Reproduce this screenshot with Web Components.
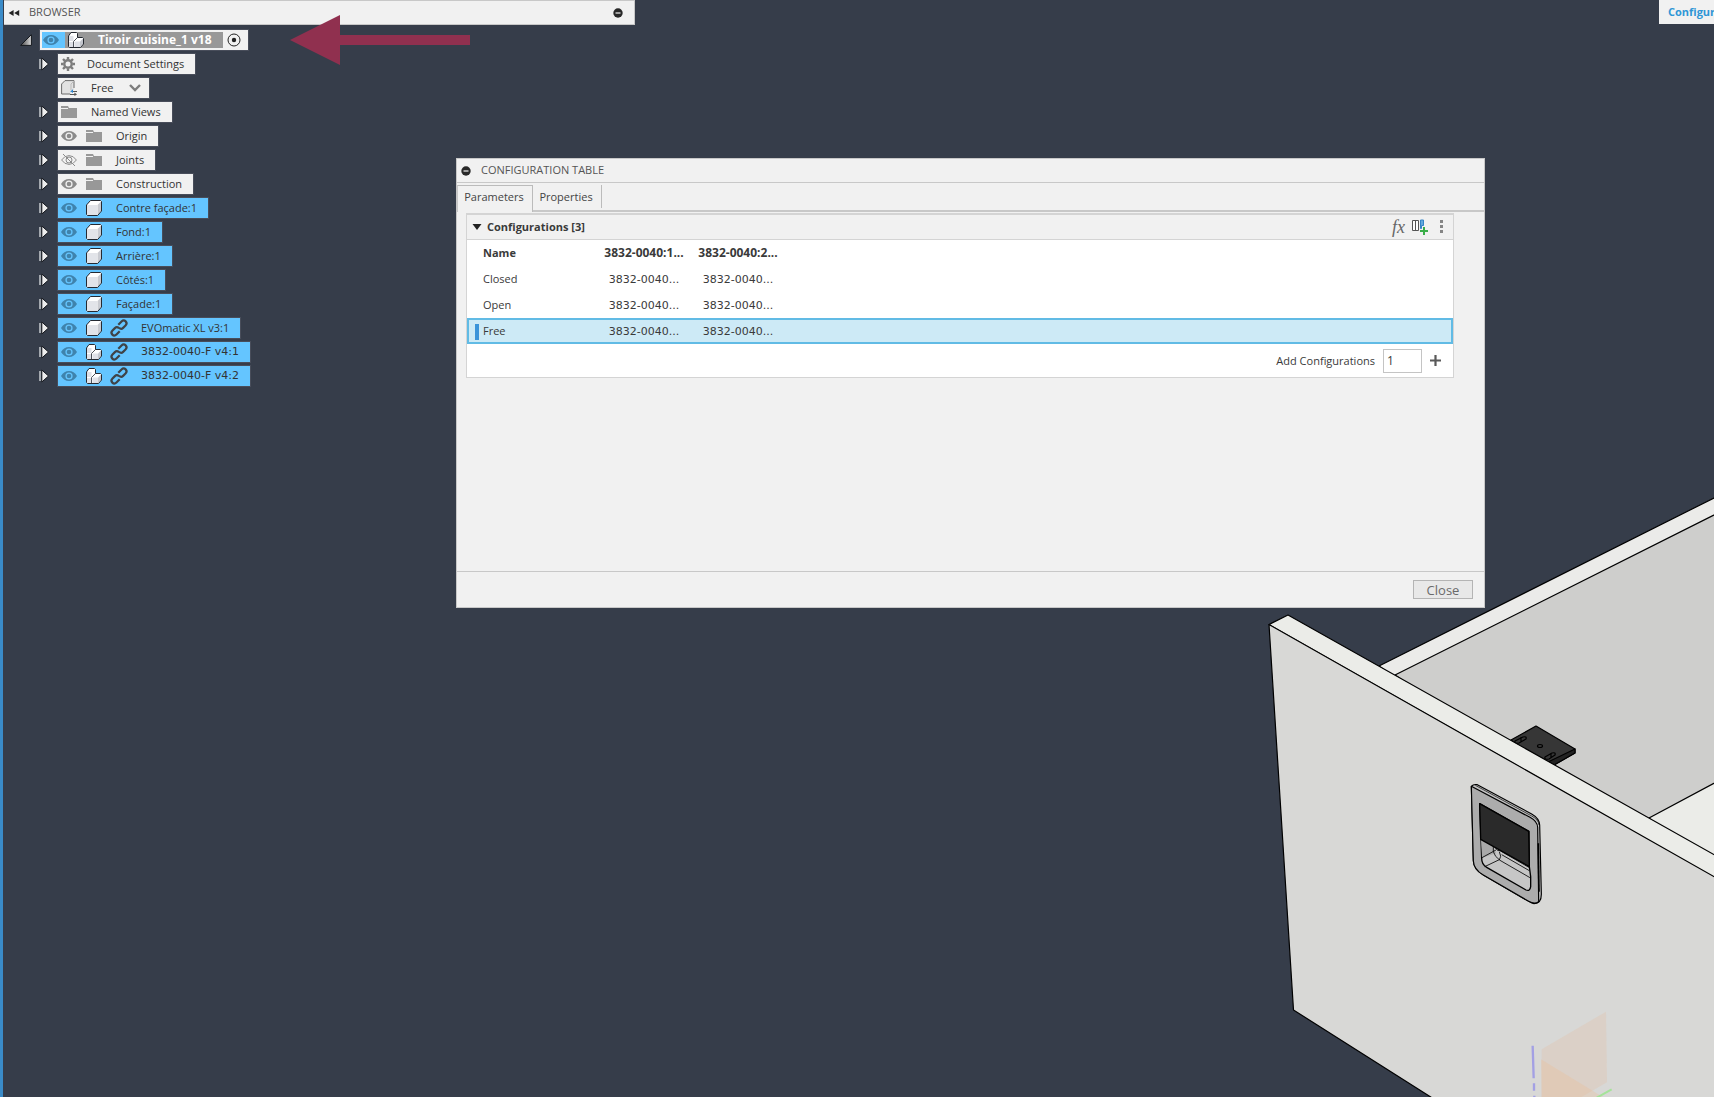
<!DOCTYPE html>
<html lang="en">
<head>
<meta charset="utf-8">
<title>Configuration Table</title>
<style>
  html, body { margin: 0; height: 100%; }
  body {
    font: 11px/16px "Open Sans", "Noto Sans", sans-serif;
    color: #3a3a3a;
    background: #363d4a;
    overflow: hidden;
    --panel: #f1f1f1;
    --line: #c8c8c8;
    --select: #64c5ff;
    --numeric: "DejaVu Sans", sans-serif;
  }
</style>
</head>
<body>
<app-workspace>
  <model-canvas slot="canvas"></model-canvas>
  <browser-panel slot="browser">
    <tree-root label="Tiroir cuisine_1 v18"></tree-root>
    <tree-item icons="gear" compact expandable>Document Settings</tree-item>
    <tree-item icons="config" choice="Free"></tree-item>
    <tree-item icons="folder" expandable>Named Views</tree-item>
    <tree-item icons="eye folder" expandable>Origin</tree-item>
    <tree-item icons="eyeoff folder" expandable>Joints</tree-item>
    <tree-item icons="eye folder" expandable>Construction</tree-item>
    <tree-item icons="eye body" expandable selected>Contre façade:1</tree-item>
    <tree-item icons="eye body" expandable selected>Fond:1</tree-item>
    <tree-item icons="eye body" expandable selected>Arrière:1</tree-item>
    <tree-item icons="eye body" expandable selected>Côtés:1</tree-item>
    <tree-item icons="eye body" expandable selected>Façade:1</tree-item>
    <tree-item icons="eye body link" expandable selected>EVOmatic XL v3:1</tree-item>
    <tree-item icons="eye assembly link" expandable selected numeric>3832-0040-F v4:1</tree-item>
    <tree-item icons="eye assembly link" expandable selected numeric>3832-0040-F v4:2</tree-item>
  </browser-panel>
  <side-tab slot="side">Configur</side-tab>
  <pointer-arrow slot="overlay"></pointer-arrow>
  <config-dialog slot="dialog" heading="CONFIGURATION TABLE"><config-table></config-table></config-dialog>
</app-workspace>

<script>
const ICONS = {
  eye: ['0 0 16 16', '<path d="M0 8Q3 3 8 3T16 8Q13 13 8 13T0 8Z" fill="currentColor"/><circle cx="8" cy="8" r="3.6" fill="var(--hole,#f1f1f1)"/><circle cx="8" cy="8" r="2.3" fill="currentColor"/>'],
  eyeoff: ['0 0 16 16', '<g fill="none" stroke="#8b8b8b"><path d="M.6 8Q3.5 3.6 8 3.6T15.4 8Q12.5 12.4 8 12.4T.6 8Z"/><circle cx="8" cy="8" r="3"/><path d="M2 2L14 14"/></g>'],
  gear: ['0 0 16 16', '<g fill="none" stroke="#7d7d7d"><circle cx="7" cy="8" r="3.7" stroke-width="2.4"/><path d="M7 1V3.6M7 12.4V15M0 8H2.6M11.4 8H14M2 3L3.9 4.9M10.1 11.1L12 13M12 3L10.1 4.9M3.9 11.1L2 13" stroke-width="2.4"/></g>'],
  folder: ['0 0 16 16', '<path d="M0 2H7L8 4H16V14H0Z" fill="#989898"/><path d="M0 4.5H7" stroke="#f1f1f1"/>'],
  body: ['0 0 16 16', '<path d="M.5 5L4.5 .5H15.5V11L11.6 15.5H.5Z" fill="#fff"/><path d="M1 5H11V15H1Z" fill="#e2e4e9"/><path d="M11.5 5L15 1.4V11L11.5 15Z" fill="#c9cbd1"/><path d="M.5 5L4.5 .5H14.5L15.5 1.5V11L11.6 15.5H1.5L.5 14.5Z" fill="none" stroke="#252a32"/>'],
  assembly: ['0 0 16 16', '<path d="M.5 4L3 .5H8.5L9.5 1.5V5.5H14.5L15.5 6.500V12L12.500 15.500H1.500L.5 14.500Z" fill="#fff"/><path d="M1 4H5.500V9H1ZM1 10H5.500V15H1ZM6.500 9.500H12V15H6.500Z" fill="#dfe1e7"/><path d="M12 9.500L15 6.500V12L12 15Z" fill="#c3c6cd"/><path d="M5.500 9.500V15M5.500 9.500L9.500 5.500" fill="none" stroke="#252a32" stroke-width=".8"/><path d="M.5 4L3 .5H8.5L9.500 1.500V5.500H14.500L15.500 6.500V12L12.500 15.500H1.500L.5 14.500Z" fill="none" stroke="#252a32"/>'],
  link: ['0 0 16 16', '<g fill="none" stroke="#3f4347" stroke-width="2.2" transform="rotate(-45 8 8)"><path d="M6.2 10.8H1.6Q-1.4 10.8 -1.4 8T1.6 5.2H5Q7.8 5.2 7.8 8.2"/><path d="M9.8 5.2H14.4Q17.4 5.2 17.4 8T14.4 10.8H11Q8.2 10.8 8.2 7.8"/></g>'],
  config: ['0 0 16 16', '<path d="M.6 4L4 .6H13V10H10V14H.6Z" fill="#e2e2e2"/><path d="M9 14H.6V4L4 .6H13V8" fill="none" stroke="#6d6d6d"/><path d="M13 1L10 4V10" fill="none" stroke="#bbb"/><path d="M10 11.5H16" stroke="#555"/><path d="M12 9.2L9.2 11.5L12 13Z" fill="#2e86d1"/><path d="M9 14.5H15" stroke="#555"/><path d="M13.4 12.5L16 14.5L13.4 16Z" fill="#555"/>'],
  collapse: ['0 0 12 8', '<path d="M5.6 1V7L.6 4ZM11.2 1V7L6.2 4Z" fill="#222"/>'],
  minus: ['0 0 10 10', '<circle cx="5" cy="5" r="4.7" fill="#282828"/><path d="M2.5 5H7.5" stroke="#f1f1f1" stroke-width="1.2"/>'],
  closedtri: ['0 0 12 14', '<path d="M2 2V12" stroke="#c9ccd1" stroke-width="1.5"/><path d="M3.800 1L10.500 7L3.800 13Z" fill="#eee" stroke="#14171d"/>'],
  opentri: ['0 0 12 12', '<defs><linearGradient id="g"><stop offset="0" stop-color="#444"/><stop offset="1" stop-color="#ddd"/></linearGradient></defs><path d="M.6 11.4H11.4V.6Z" fill="url(#g)" stroke="#15181d"/>'],
  radio: ['0 0 14 14', '<circle cx="7" cy="7" r="6" fill="none" stroke="#222"/><circle cx="7" cy="7" r="2.2" fill="#222"/>'],
  chevron: ['0 0 12 8', '<path d="M1 1L6 6L11 1" fill="none" stroke="#7c7c7c" stroke-width="2.4"/>'],
  caret: ['0 0 10 8', '<path d="M.5 1H9.5L5 7Z" fill="#222"/>'],
  columns: ['0 0 16 16', '<path d="M.5 1.5H6.5V11.5H.5ZM3.5 1.5V11.5" fill="#fff" stroke="#555"/><path d="M8.5 1H11.5V6.5H9.5V9.5H8.5Z" fill="#64a9dd" stroke="#3484c6"/><path d="M12 8V16M8 12H16" stroke="#3bae49" stroke-width="2"/>'],
  dots: ['0 0 4 14', '<g fill="#858585"><rect x="0" y="0" width="3" height="3"/><rect x="0" y="5" width="3" height="3"/><rect x="0" y="10" width="3" height="3"/></g>'],
  plus: ['0 0 10 10', '<path d="M5 0V10M0 5H10" stroke="#595959" stroke-width="2"/>']
};

const RESET = `
  *, *::before { box-sizing: border-box; }
  button, input, select { font: inherit; color: inherit; margin: 0; padding: 0; border: 0; background: none; border-radius: 0; }
  button { display: flex; align-items: center; justify-content: center; }
`;

class Base extends HTMLElement {
  connectedCallback() {
    if (this.shadowRoot) return;
    this.attachShadow({ mode: 'open' }).innerHTML = `<style>${RESET}${this.css()}</style>${this.html()}`;
  }
  css() { return ':host{display:block}'; }
  html() { return '<slot></slot>'; }
}

customElements.define('ui-icon', class extends Base {
  css() { return ':host{display:block;flex:none;width:16px;height:16px} svg{display:block;width:100%;height:100%;overflow:visible}'; }
  html() {
    const [box, art] = ICONS[this.getAttribute('name')];
    return `<svg viewBox="${box}" aria-hidden="true">${art}</svg>`;
  }
});

customElements.define('app-workspace', class extends Base {
  css() { return `
    :host { display: block; position: relative; min-height: 100vh; overflow: hidden; border-left: 3px solid #3a8bc8; }
    .canvas { position: absolute; inset: 0 0 0 -3px; }
    .top { position: relative; display: flex; justify-content: space-between; align-items: flex-start; padding-left: 1px; }
    .overlay { position: absolute; left: 287px; top: 15px; }
    .dialog { position: absolute; left: 453px; right: 229px; top: 158px; }`; }
  html() { return `
    <div class="canvas"><slot name="canvas"></slot></div>
    <div class="top"><slot name="browser"></slot><slot name="side"></slot></div>
    <div class="overlay"><slot name="overlay"></slot></div>
    <div class="dialog"><slot name="dialog"></slot></div>`; }
});

customElements.define('side-tab', class extends Base {
  css() { return `
    :host { display: block; width: 55px; overflow: hidden; background: var(--panel); }
    a { display: block; padding: 4px 0 4px 9px; color: #2f96d6; font-weight: 700; text-decoration: none; white-space: nowrap; }`; }
  html() { return '<a href="#"><slot></slot></a>'; }
});

customElements.define('pointer-arrow', class extends Base {
  css() { return ':host,svg{display:block}'; }
  html() { return '<svg width="180" height="50" aria-hidden="true"><path d="M0 25L50 0V20H180V30H50V50Z" fill="#90304f"/></svg>'; }
});

customElements.define('browser-panel', class extends Base {
  css() { return `
    :host { display: block; flex: 0 1 631px; }
    header { display: flex; align-items: center; height: 25px; padding: 0 11px 0 4px; background: var(--panel); border: 1px solid var(--line); border-left: 0; }
    h2 { flex: 1; margin: 0; padding: 0 0 2px 9px; font-size: 11px; font-weight: 400; color: #555; }
    .c { width: 12px; height: 8px; } .m { width: 10px; height: 10px; }
    .tree { display: flex; flex-direction: column; align-items: flex-start; gap: 4px; padding-top: 5px; }`; }
  html() { return `
    <header><button aria-label="Collapse"><ui-icon class="c" name="collapse"></ui-icon></button><h2>BROWSER</h2><button aria-label="Hide"><ui-icon class="m" name="minus"></ui-icon></button></header>
    <div class="tree"><slot></slot></div>`; }
});

customElements.define('tree-root', class extends Base {
  css() { return `
    :host { display: flex; align-items: center; height: 20px; padding-left: 16px; }
    .t { width: 12px; height: 12px; }
    .row { display: flex; height: 20px; margin-left: 8px; padding: 2px 8px 2px 2px; background: var(--panel); box-shadow: 0 0 0 1px #484d5a; }
    .eye { width: 23px; justify-content: flex-start; padding-left: 1px; background: var(--select); color: #3f83ad; --hole: var(--select); }
    .name { display: flex; align-items: center; width: 158px; padding-left: 3px; background: #989898; color: #fff; font-size: 12px; font-weight: 700; white-space: nowrap; }
    .name span { padding-left: 14px; }
    .r { width: 14px; height: 14px; margin-left: 4px; }
    .row { padding-right: 7px; }`; }
  html() { return `
    <button aria-label="Collapse"><ui-icon class="t" name="opentri"></ui-icon></button>
    <div class="row"><button class="eye" aria-label="Visibility"><ui-icon name="eye"></ui-icon></button>
    <div class="name"><ui-icon name="assembly"></ui-icon><span>${this.getAttribute('label')}</span></div>
    <button aria-label="Activate"><ui-icon class="r" name="radio"></ui-icon></button></div>`; }
});

customElements.define('tree-item', class extends Base {
  css() { return `
    :host { display: flex; align-items: center; height: 20px; padding-left: 34px; }
    .x { width: 20px; justify-content: flex-start; }
    .x ui-icon { width: 12px; height: 14px; }
    .row { display: flex; align-items: center; height: 20px; padding: 0 8px 0 3px; background: var(--panel); color: #333; box-shadow: 0 0 0 1px #484d5a; }
    :host([selected]) .row { background: var(--select); --hole: var(--select); }
    .i { width: 25px; justify-content: flex-start; color: #8b8b8b; }
    :host([selected]) .i { color: #3f83ad; }
    :host([compact]) .i { width: 21px; }
    .label { padding: 0 3px 0 5px; white-space: nowrap; }
    :host([numeric]) .label { font-family: var(--numeric); }
    .pick { display: grid; align-items: center; padding-left: 5px; }
    .pick > * { grid-area: 1 / 1; }
    .pick ui-icon { justify-self: end; width: 12px; height: 8px; pointer-events: none; }
    select { appearance: none; width: 50px; height: 16px; }`; }
  html() {
    const choice = this.getAttribute('choice');
    const icons = this.getAttribute('icons').split(' ').map(n => n.startsWith('eye')
      ? `<button class="i" aria-label="Visibility"><ui-icon name="${n}"></ui-icon></button>`
      : `<span class="i"><ui-icon name="${n}"></ui-icon></span>`).join('');
    const expander = this.hasAttribute('expandable')
      ? '<button class="x" aria-label="Expand"><ui-icon name="closedtri"></ui-icon></button>' : '<span class="x"></span>';
    const body = choice
      ? `<span class="pick"><select aria-label="Active configuration"><option>${choice}</option></select><ui-icon name="chevron"></ui-icon></span>`
      : '<span class="label"><slot></slot></span>';
    return `${expander}<div class="row">${icons}${body}</div>`;
  }
});

customElements.define('config-dialog', class extends Base {
  css() { return `
    :host { display: block; background: var(--panel); border: 1px solid var(--line); }
    header { display: flex; align-items: center; gap: 9px; height: 24px; padding-left: 4px; border-bottom: 1px solid var(--line); }
    .m { width: 10px; height: 10px; }
    h2 { margin: 0; padding: 0 0 2px 1px; font-size: 11px; font-weight: 400; color: #555; }
    nav { display: flex; margin-top: 2px; height: 27px; }
    nav button { color: #444; }
    nav::after { content: ""; flex: 1; border-bottom: 2px solid var(--line); }
    .on { width: 76px; padding: 0 2px 4px 0; border: 1px solid #bbb; border-bottom: 0; border-left-color: var(--line); }
    .off { display: flex; width: 69px; border-bottom: 2px solid var(--line); }
    .off button { flex: 1; height: 23px; padding-right: 2px; border-right: 1px solid #bbb; }
    main { min-height: 359px; padding: 1px 30px 0 9px; box-sizing: border-box; }
    footer { display: flex; justify-content: flex-end; padding: 8px 11px; border-top: 1px solid var(--line); }
    footer button { width: 60px; height: 19px; border: 1px solid #b4b4b4; background: #e8e8e8; color: #6a6a6a; font-size: 13px; }`; }
  html() { return `
    <header><button aria-label="Minimise"><ui-icon class="m" name="minus"></ui-icon></button><h2>${this.getAttribute('heading')}</h2></header>
    <nav><button class="on">Parameters</button><span class="off"><button>Properties</button></span></nav>
    <main><slot></slot></main>
    <footer><button>Close</button></footer>`; }
});

customElements.define('config-table', class extends Base {
  css() { return `
    :host { display: block; background: #fff; border: 1px solid #d4d4d4; border-top-width: 2px; }
    header { display: flex; align-items: center; height: 25px; padding: 0 9px 0 5px; background: var(--panel); border-bottom: 1px solid #d4d4d4; }
    h3 { flex: 1; margin: 0; padding-left: 5px; font-size: 11px; }
    .caret { width: 10px; height: 8px; }
    .fx { font: italic 18px/20px "Liberation Serif", serif; color: #666; margin-right: 7px; }
    .dots { width: 4px; height: 14px; margin-left: 12px; }
    table { width: 100%; border-collapse: collapse; table-layout: fixed; }
    tr { height: 26px; }
    th, td { padding: 1px 0 0; line-height: 24px; vertical-align: baseline; text-align: center; white-space: nowrap; }
    th:first-child, td:first-child { width: 130px; padding-left: 16px; text-align: left; }
    th:not(:first-child), td:not(:first-child) { width: 94px; }
    th.rest, td.rest { width: auto; }
    th.n { font-size: 12px; }
    td.n { font-family: var(--numeric); }
    tr.sel { background: #cdeaf6; outline: 2px solid #61bbe5; outline-offset: -2px; }
    tr.sel td:first-child { padding-left: 8px; }
    tr.sel td:first-child::before { content: ""; display: inline-block; width: 4px; height: 16px; margin-right: 4px; background: #3b94d9; vertical-align: middle; }
    footer { display: flex; align-items: center; justify-content: flex-end; height: 33px; padding-right: 12px; }
    input { width: 39px; height: 24px; margin: 0 8px; padding-left: 3px; border: 1px solid #c4c4c4; background: #fff; font-size: 12px; }
    .plus { width: 11px; height: 11px; }`; }
  html() {
    const rows = ['Closed', 'Open', 'Free'].map(n => `<tr${n === 'Free' ? ' class="sel"' : ''}><td>${n}</td><td class="n">3832-0040...</td><td class="n">3832-0040...</td><td class="rest"></td></tr>`).join('');
    return `
    <header><button aria-label="Toggle"><ui-icon class="caret" name="caret"></ui-icon></button><h3>Configurations [3]</h3>
      <button class="fx">fx</button><button aria-label="Add column"><ui-icon name="columns"></ui-icon></button><button aria-label="More"><ui-icon class="dots" name="dots"></ui-icon></button></header>
    <table><thead><tr><th>Name</th><th class="n">3832-0040:1...</th><th class="n">3832-0040:2...</th><th class="rest"></th></tr></thead><tbody>${rows}</tbody></table>
    <footer><label for="count">Add Configurations</label><input id="count" type="text" inputmode="numeric" value="1"><button aria-label="Add"><ui-icon class="plus" name="plus"></ui-icon></button></footer>`;
  }
});

customElements.define('model-canvas', class extends Base {
  css() { return ':host,svg{display:block;width:100%;height:100%}'; }
  html() { return `
  <svg viewBox="0 0 1714 1097" preserveAspectRatio="xMaxYMin slice" role="img" aria-label="Drawer model">
    <g stroke="#000" stroke-width="1.2" stroke-linejoin="round">
      <path d="M1379 666L1714 498H1720V900H1700Z" fill="#ebebe9"/>
      <path d="M1395 675L1720 512V900Z" fill="#cececc"/>
      <path d="M1649 818L1720 780V900Z" fill="#ebece8"/>
      <path d="M1511 740L1536 726L1575 749V753L1554 765L1546 770Z" fill="#363636"/>
      <path d="M1575 749V753L1554 765L1548 762Z" fill="#222"/>
      <ellipse cx="1540" cy="746" rx="2.5" ry="1.5" fill="none"/>
      <path d="M1515 741L1523 737Q1527 736 1526 739L1519 743Q1514 744 1515 741ZM1521 737V742M1545 757L1552 753Q1556 752 1555 755L1549 759Q1544 760 1545 757ZM1551 753V758" fill="none"/>
      <path d="M1269 624.500L1288 615L1720 858V881Z" fill="#ebece8"/>
      <path d="M1269 624.500L1720 880V1120H1467L1293.500 1010Z" fill="#d8d8d6"/>
    </g>
    <g transform="translate(1450 710) scale(.33333)" stroke="#000" stroke-width="3.5" stroke-linejoin="round" fill="none">
      <path d="M64 229Q70 222 82 224L245 312Q268 325 269 345L274 550Q275 580 252 581Q246 580 236 574L100 495Q71 478 70 452Z" fill="#c4c4c4"/>
      <path d="M64 229L240 322Q262 334 263 352L266 575Q254 584 236 574L100 495Q71 478 70 452Z" fill="#acacac"/>
      <path d="M76 226L245 318Q266 329 267 345" stroke-width="2"/>
      <path d="M265 400L267 545" stroke-width="5"/>
      <path d="M89 281L237 364L238 470L242 500V530Q240 545 228 540L110 472Q95 464 95 445Z" fill="#c6c6c6" stroke-width="4"/>
      <path d="M93 390L130 408L138 430L96 443Z" fill="#a9a9a9" stroke="none"/>
      <path d="M130 408V425Q134 440 150 451L240 503M96 443L138 420M104 470L148 449M148 425Q156 440 148 450M150 422L240 474M155 434L238 482" stroke-width="2.500"/>
      <path d="M135 412Q142 425 150 422" stroke-width="2.500"/>
      <path d="M89 281L236 364L238 470L92 388Z" fill="#2a2a2a" stroke-width="4"/>
    </g>
    <g transform="translate(1260 780) scale(.33333)">
      <path d="M845 808L1038 695L1041 907L940 965H845Z" fill="#e4b995" fill-opacity=".24"/>
      <path d="M843 838L1060 970H845Z" fill="#efb98c" fill-opacity=".26"/>
      <path d="M818 797L821 895M822 910V932M823 947V960" stroke="#a3a0e4" stroke-width="7"/>
      <path d="M1005 956L1055 928" stroke="#a5e39a" stroke-width="6"/>
    </g>
  </svg>`; }
});
</script>
</body>
</html>
